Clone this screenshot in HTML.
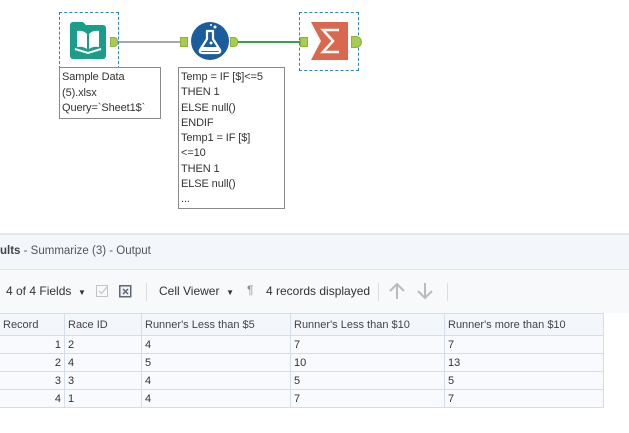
<!DOCTYPE html>
<html><head><style>
*{margin:0;padding:0;box-sizing:border-box}
body{width:629px;height:433px;background:#fff;font-family:"Liberation Sans",sans-serif;position:relative;overflow:hidden;color:#333}
.a{position:absolute}
.lbl{position:absolute;border:1px solid #8a8a8a;background:#fff;font-size:11px;line-height:15.5px;color:#333;padding:2px 2px;white-space:nowrap;letter-spacing:-0.1px}
.dash{position:absolute;border:1px dashed #2b7fd6}
.anc{position:absolute;width:8px;height:10px;background:#a6cd4e;border:1px solid #8fb23e}
table{position:absolute;left:-1px;top:313px;border-collapse:collapse;font-size:11px;color:#333}
td{border:1px solid #d5dde8;height:18px;padding:0 3px;background:#f8fafd;white-space:nowrap}
tr.h td{height:22px;background:#f3f6fa;color:#444}
</style></head><body>
<div class="a" style="left:118px;top:41px;width:63px;height:2px;background:#a8a8a8"></div>
<div class="a" style="left:238px;top:41px;width:62px;height:2px;background:#3a9e4f"></div>
<div class="dash" style="left:59px;top:12px;width:60px;height:57px"></div>
<svg class="a" style="left:70px;top:22px" width="36" height="37" viewBox="0 0 36 37">
<path d="M3 0h10l3 3h17a3 3 0 0 1 3 3v28a3 3 0 0 1-3 3H3a3 3 0 0 1-3-3V3a3 3 0 0 1 3-3z" fill="#1a9e8a"/>
<path d="M7 9q6-1 10 3v15q-4-3-10-2z M29 9q-6-1-10 3v15q4-3 10-2z" fill="#fff"/>
<path d="M5 27l13 4 13-4" stroke="#fff" stroke-width="2" fill="none"/>
</svg>
<div class="anc" style="left:110px;top:37px;border-radius:0 4px 4px 0"></div>
<div class="lbl" style="left:59px;top:67px;width:102px;height:52px">Sample Data<br>(5).xlsx<br>Query=`Sheet1$`</div>
<div class="anc" style="left:180px;top:37px"></div>
<svg class="a" style="left:191px;top:22px" width="38" height="38" viewBox="0 0 38 38">
<circle cx="19" cy="19" r="19" fill="#1b5d9c"/>
<path d="M15 9h8M16 9v8l-7 11q-1 3 3 3h14q4 0 3-3l-7-11V9" stroke="#fff" stroke-width="2.2" fill="none"/>
<path d="M11 25h16l2 4H9z" fill="#fff"/>
<circle cx="20" cy="21" r="1.5" fill="#fff"/><circle cx="24" cy="5" r="1.5" fill="#fff"/><circle cx="20" cy="3" r="1" fill="#fff"/>
</svg>
<div class="anc" style="left:230px;top:37px;border-radius:0 4px 4px 0"></div>
<div class="lbl" style="left:178px;top:67px;width:107px;height:142px;line-height:15.3px">Temp = IF [$]&lt;=5<br>THEN 1<br>ELSE null()<br>ENDIF<br>Temp1 = IF [$]<br>&lt;=10<br>THEN 1<br>ELSE null()<br>...</div>
<div class="dash" style="left:299px;top:12px;width:60px;height:59px"></div>
<div class="anc" style="left:300px;top:37px"></div>
<svg class="a" style="left:311px;top:22px" width="37" height="38" viewBox="0 0 37 38">
<path d="M0 0h37v38H0l10-19z" fill="#d9684e"/>
<path d="M28 8H12l10 11-10 11h16" stroke="#fff" stroke-width="2.5" fill="none"/>
</svg>
<div class="anc" style="left:351px;top:36px;width:11px;height:12px;border-radius:0 6px 6px 0"></div>
<div class="a" style="left:0;top:233px;width:629px;height:2px;background:#e2e7ee"></div>
<div class="a" style="left:0;top:235px;width:629px;height:35px;background:#f3f6fa;border-bottom:1px solid #dde3ea"></div>
<div class="a" style="left:0;top:245px;font-size:11.5px;color:#555"><b style="color:#444">ults</b> - Summarize (3) - Output</div>
<div class="a" style="left:0;top:271px;width:629px;height:42px;background:#f8f9fb"></div>
<div class="a" style="left:6px;top:284px;font-size:12px;color:#333">4 of 4 Fields &nbsp;<span style="font-size:8px">▼</span></div>
<svg class="a" style="left:96px;top:285px" width="13" height="13" viewBox="0 0 13 13"><rect x="0.5" y="0.5" width="11" height="11" fill="none" stroke="#c4c4c4"/><path d="M3 6l2.5 2.5L11 2" stroke="#c4c4c4" fill="none" stroke-width="1.2"/></svg>
<svg class="a" style="left:119px;top:285px" width="13" height="13" viewBox="0 0 13 13"><rect x="0.75" y="0.75" width="11" height="11" fill="#eef0f4" stroke="#5f6878" stroke-width="1.5"/><path d="M4 4l5 5M9 4l-5 5" stroke="#5f6878" stroke-width="1.5"/></svg>
<div class="a" style="left:146px;top:283px;width:1px;height:18px;background:#ddd"></div>
<div class="a" style="left:159px;top:284px;font-size:12px;color:#333">Cell Viewer &nbsp;<span style="font-size:8px">▼</span></div>
<div class="a" style="left:247px;top:283px;font-size:12px;color:#8a9099">¶</div>
<div class="a" style="left:266px;top:284px;font-size:12px;color:#333">4 records displayed</div>
<div class="a" style="left:378px;top:283px;width:1px;height:18px;background:#ddd"></div>
<svg class="a" style="left:389px;top:282px" width="16" height="18" viewBox="0 0 16 18"><path d="M8 17V2M1 9l7-7 7 7" stroke="#bbb" stroke-width="2" fill="none"/></svg>
<svg class="a" style="left:417px;top:282px" width="16" height="18" viewBox="0 0 16 18"><path d="M8 1v15M1 9l7 7 7-7" stroke="#bbb" stroke-width="2" fill="none"/></svg>
<div class="a" style="left:447px;top:283px;width:1px;height:18px;background:#ddd"></div>
<table>
<tr class="h"><td style="width:65px">Record</td><td style="width:77px">Race ID</td><td style="width:149px">Runner's Less than $5</td><td style="width:154px">Runner's Less than $10</td><td style="width:159px">Runner's more than $10</td></tr>
<tr><td style="text-align:right">1</td><td>2</td><td>4</td><td>7</td><td>7</td></tr>
<tr><td style="text-align:right">2</td><td>4</td><td>5</td><td>10</td><td>13</td></tr>
<tr><td style="text-align:right">3</td><td>3</td><td>4</td><td>5</td><td>5</td></tr>
<tr><td style="text-align:right">4</td><td>1</td><td>4</td><td>7</td><td>7</td></tr>
</table>
</body></html>
